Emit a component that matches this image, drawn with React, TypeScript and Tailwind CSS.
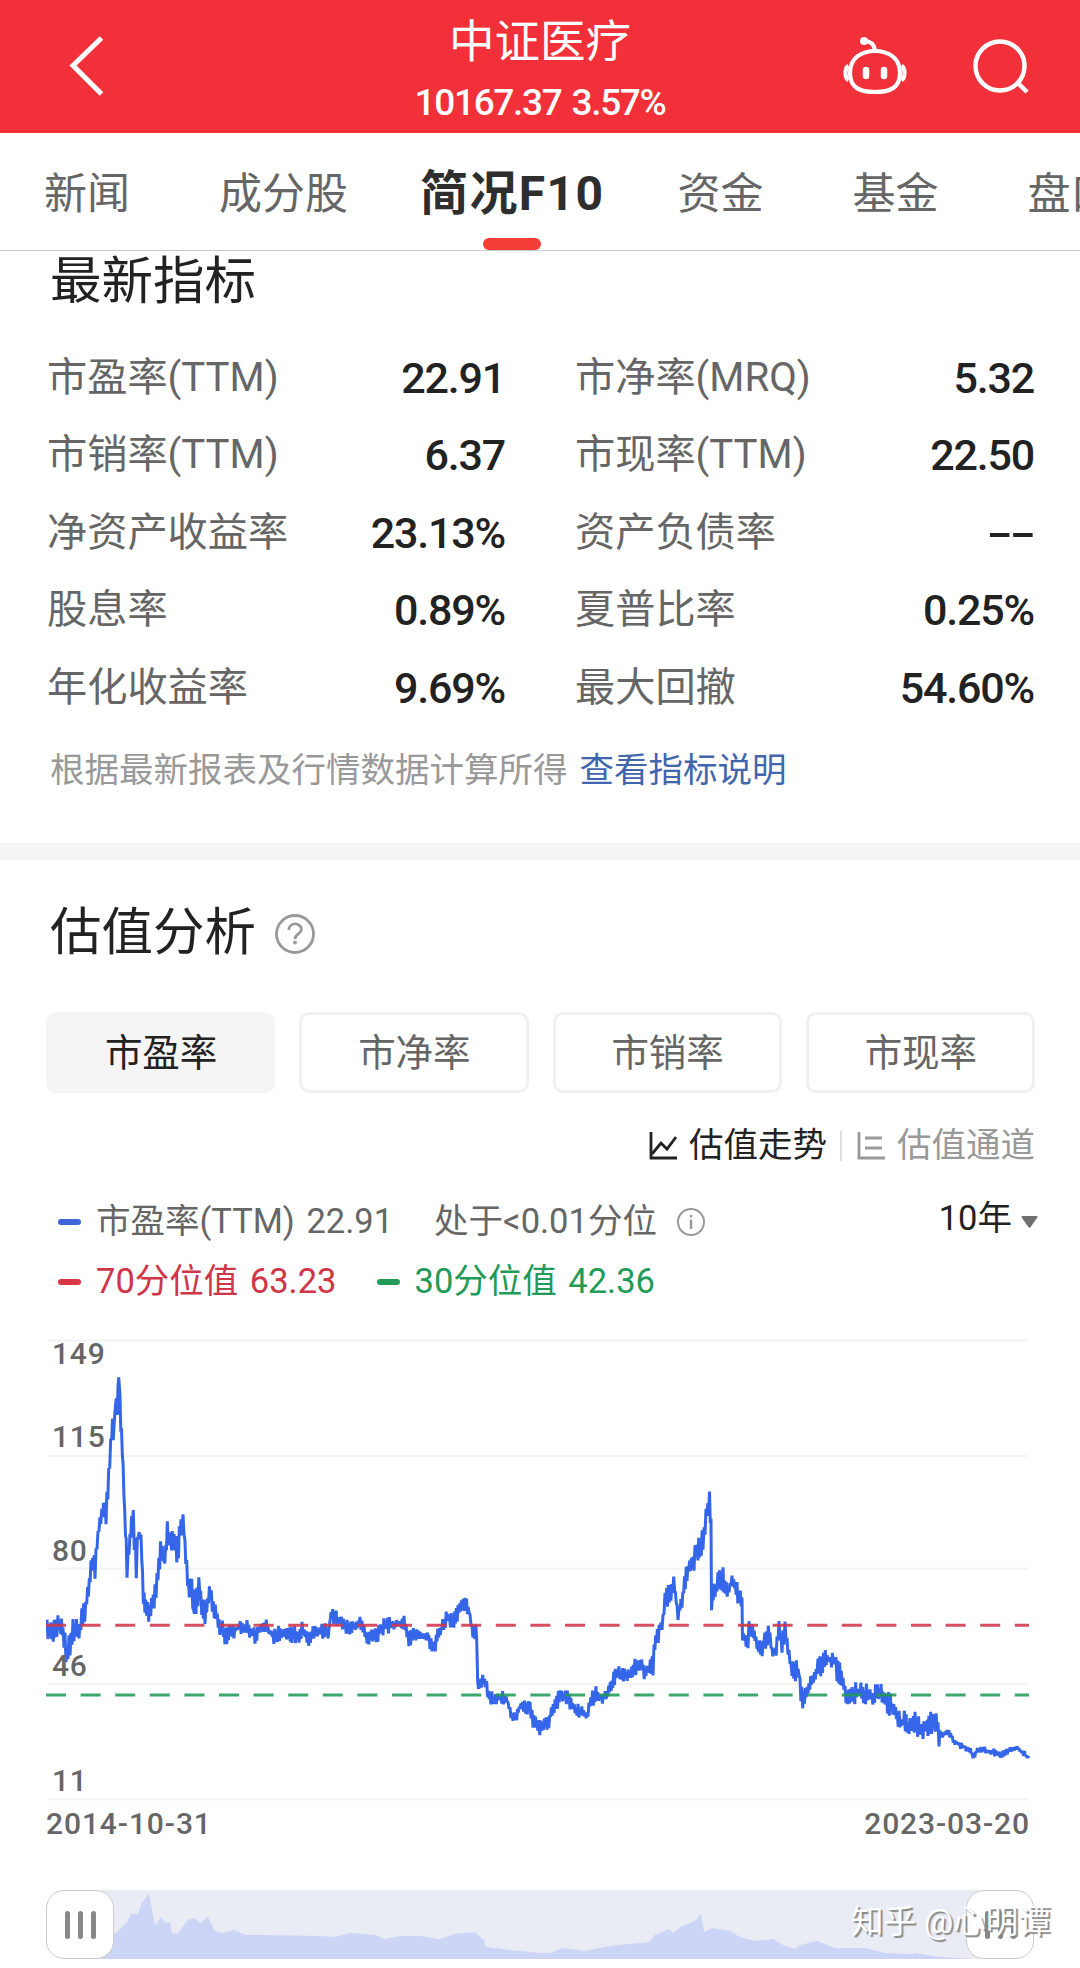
import clsx from 'clsx';

const tabs = ['新闻', '成分股', '简况F10', '资金', '基金', '盘口'];

const metrics = [
  ['市盈率(TTM)', '22.91'],
  ['市净率(MRQ)', '5.32'],
  ['市销率(TTM)', '6.37'],
  ['市现率(TTM)', '22.50'],
  ['净资产收益率', '23.13%'],
  ['资产负债率', '--'],
  ['股息率', '0.89%'],
  ['夏普比率', '0.25%'],
  ['年化收益率', '9.69%'],
  ['最大回撤', '54.60%'],
];

const kinds = ['市盈率', '市净率', '市销率', '市现率'];

const gridLines = [
  { y: 1340.5, label: '149', base: 1364 },
  { y: 1456, label: '115', base: 1447 },
  { y: 1568.5, label: '80', base: 1561 },
  { y: 1684, label: '46', base: 1676 },
  { y: 1799.5, label: '11', base: 1791 },
];

// x, y pairs of the valuation curve; daily jitter is added in buildTrend
const trend = [
  47, 1622, 50, 1633, 55, 1630, 60.7, 1624, 63, 1637, 67, 1655, 70, 1646, 74, 1628, 79, 1634, 82.7, 1618, 86.7, 1600,
  92.7, 1563, 95, 1565, 99, 1527, 102.7, 1509, 106, 1518, 108.7, 1477, 111.7, 1430, 114, 1437, 115.3, 1403, 117.3, 1410,
  118.7, 1372, 120, 1407, 122.3, 1443, 124.7, 1513, 127, 1574, 130, 1540, 132.3, 1509, 134.3, 1537, 136.3, 1565,
  138.3, 1533, 141, 1537, 143.3, 1600, 145.7, 1609, 148.7, 1618, 150.7, 1603, 155, 1593, 158, 1567, 161.3, 1543,
  164, 1564, 167.3, 1531, 170, 1543, 172.3, 1534, 174, 1547, 177.7, 1551, 181, 1523, 184, 1529, 186.7, 1573, 189.3, 1589,
  191.7, 1589, 193.7, 1614, 196, 1599, 199.7, 1588, 201.7, 1612, 206.7, 1609, 210.3, 1591, 213.3, 1612, 217.3, 1618,
  220.7, 1627, 226.7, 1636, 233, 1631, 242, 1625, 247, 1629, 255, 1635, 262, 1625, 268, 1630, 273, 1636, 283, 1633,
  300, 1635, 303, 1628, 307, 1641, 313, 1634, 329, 1630, 330.3, 1617, 332, 1614, 337, 1620, 348, 1629, 360, 1622,
  364, 1633, 367, 1640, 377, 1635, 383, 1627, 393, 1625, 404, 1622, 408, 1638, 415, 1634, 423, 1637, 428, 1634,
  432, 1650, 437, 1640, 442, 1627, 447, 1617, 453, 1622, 458, 1611, 465.7, 1604, 469, 1610, 472, 1630, 476.7, 1633,
  477.7, 1684, 480, 1685, 482.7, 1679, 486.7, 1687, 490, 1700, 500, 1698, 507, 1700, 511, 1715, 515, 1716, 520, 1707,
  530, 1707, 533, 1723, 538, 1728, 547, 1724, 555, 1705, 560, 1695, 570, 1701, 576, 1711, 580, 1710, 587, 1716,
  590, 1702, 595, 1695, 607, 1697, 612, 1682, 617, 1675, 630, 1676, 635, 1667, 640, 1662, 645, 1672, 653, 1669,
  654, 1647, 660, 1627, 663, 1620, 665, 1603, 670, 1593, 673.7, 1582, 678, 1614, 682, 1600, 687, 1570, 693, 1563,
  697, 1549, 703, 1541, 707, 1513, 709.5, 1501, 711, 1527, 711.5, 1603, 714, 1593, 717, 1585, 723, 1579, 728, 1590,
  732, 1580, 737, 1592, 742, 1600, 742.5, 1638, 747, 1639, 750, 1629, 755, 1637, 758, 1650, 763, 1643, 770, 1636,
  772, 1653, 777, 1649, 779, 1627, 782, 1641, 786, 1631, 788, 1650, 792, 1671, 799, 1671, 800, 1691, 802.7, 1698,
  808, 1687, 818, 1668, 828, 1659, 835, 1662, 838, 1672, 843, 1680, 846, 1697, 853, 1698, 860, 1690, 870, 1697,
  883, 1695, 892, 1707, 900, 1723, 907, 1722, 910, 1729, 915, 1724, 923, 1730, 928, 1724, 937, 1722, 939, 1738,
  947, 1731, 955, 1742, 967, 1748, 973, 1755, 980, 1749, 992, 1752, 1002, 1755, 1011, 1748, 1018, 1749, 1029, 1758,
];

const overview =
  '114,1934 120,1929 127,1922 131,1914 138,1914 142,1903 149,1893 155,1926 161,1917 165,1923 170,1922 172,1934 178,1933 188,1920 195,1918 200,1923 208,1917 215,1931 222,1933 234,1930 245,1935 262,1935 320,1936 335,1937 350,1933 375,1935 385,1939 400,1936 420,1936 440,1939 455,1934 475,1932 484,1940 486,1947 510,1950 540,1953 550,1953 562,1948 585,1951 610,1946 648,1942 655,1935 669,1929 673,1933 680,1927 695,1921 701,1914 704,1932 712,1928 730,1931 740,1937 755,1941 773,1939 785,1946 795,1949 800,1945 817,1941 835,1948 865,1948 885,1953 910,1954 915,1953 940,1957 975,1959 114,1959';

function buildTrend() {
  const out: string[] = [];
  let seed = 7;
  for (let i = 0; i < trend.length - 2; i += 2) {
    const [x0, y0, x1, y1] = trend.slice(i, i + 4);
    const steps = Math.max(1, Math.round((x1 - x0) / 0.9));
    for (let s = 0; s < steps; s++) {
      seed = (seed * 16807) % 2147483647;
      const noise = (seed / 2147483647) ** 1.5 * 0.85 + 0.15;
      const side = out.length % 2 ? 1 : -1;
      const x = x0 + ((x1 - x0) * s) / steps;
      const amp = x < 225 ? 15 : x > 940 ? 4 : x > 650 ? 13 : 9;
      const y = y0 + ((y1 - y0) * s) / steps + side * noise * amp;
      out.push(`${x.toFixed(1)},${y.toFixed(1)}`);
    }
  }
  out.push('1029,1758');
  return out.join(' ');
}

function Header() {
  return (
    <header className="grid h-[133px] shrink-0 grid-cols-3 bg-[#f23039] text-white">
      <div className="flex items-center pl-[66px] pb-1">
        <svg width="42" height="64" viewBox="0 0 42 64" fill="none" stroke="currentColor" strokeWidth="5">
          <path d="M35.5 5 7 32.5 35.5 61" />
        </svg>
      </div>
      <div className="flex flex-col items-center pt-[15px]">
        <h1 className="text-[45.5px] leading-[56px]">中证医疗</h1>
        <p className="mt-[12px] text-[37px] font-medium leading-[40px] tracking-[-1.3px] [word-spacing:2px] whitespace-nowrap">10167.37 3.57%</p>
      </div>
      <div className="flex items-start justify-end pr-[49px] pt-[35px]">
        {/* robot assistant */}
        <svg className="mr-[63px]" width="66" height="62" viewBox="0 0 66 62" fill="none" stroke="currentColor" strokeWidth="4.2">
          <path d="M33 16c13 0 25 6.500 25 22 0 15-10 19-25 19S8 53 8 38c0-15.500 12-22 25-22Z" />
          <path d="M22 6c7 0 10 3 11 9" />
          <circle cx="22" cy="6" r="4" fill="currentColor" stroke="none" />
          <path d="M6.500 31c-4 2-4 12 0 14M59.500 31c4 2 4 12 0 14" />
          <path d="M24 35v6M42 35v6" strokeWidth="6.500" strokeLinecap="round" />
        </svg>
        <svg width="60" height="62" viewBox="0 0 60 62" fill="none" stroke="currentColor" strokeWidth="4.5">
          <circle cx="29" cy="31" r="24.5" />
          <path d="m46 47 10 10" />
        </svg>
      </div>
    </header>
  );
}

function TabBar() {
  return (
    <nav className="flex h-[118px] shrink-0 gap-[89px] overflow-hidden border-b border-[#c9c9c9] pl-[44px] pt-[33px] whitespace-nowrap text-[#666]">
      {tabs.map((tab) =>
        tab === '简况F10' ? (
          <div key={tab} className="-ml-[17px] -mr-[16px] flex flex-col items-center">
            <span className="text-[48px] font-bold leading-[56px] tracking-[1.4px] text-[#2e2e2e]">{tab}</span>
            <i className="mt-[16px] h-[12px] w-[58px] rounded-full bg-[#f43d37]" />
          </div>
        ) : (
          <span key={tab} className="text-[43px] leading-[56px]">{tab}</span>
        ),
      )}
    </nav>
  );
}

function Indicators() {
  return (
    <section className="h-[592px] shrink-0 pl-[47px] pr-[46px] pt-[3px]">
      <h2 className="pl-[3px] text-[51.5px] leading-[56px] text-[#222]">最新指标</h2>
      <div className="mt-[29px] grid grid-cols-[458px_459px] gap-x-[70px]">
        {metrics.map(([label, value]) => (
          <div key={label} className="flex h-[77.5px] items-center justify-between">
            <span className="text-[40.2px] text-[#666]">{label}</span>
            <span
              className={clsx(
                'text-[43px] font-medium tracking-[-1.2px] text-[#222]',
                value === '--' && 'origin-right scale-x-[1.75]',
              )}
            >
              {value}
            </span>
          </div>
        ))}
      </div>
      <p className="mt-[20px] pl-[3px] text-[34.5px] leading-[46px] text-[#999]">
        根据最新报表及行情数据计算所得
        <a className="ml-[12px] text-[#4166ad]">查看指标说明</a>
      </p>
    </section>
  );
}

function Dash({ className }: { className: string }) {
  return <i className={clsx('h-[6px] w-[23px] rounded-full', className)} />;
}

function Legend() {
  return (
    <div className="mt-[22px] flex flex-col pl-[12px] text-[34.5px] text-[#666] [word-spacing:3px]">
      <div className="flex h-[60px] items-center">
        <Dash className="bg-[#4164d8]" />
        <span className="ml-[15px]">市盈率(TTM) 22.91</span>
        <span className="ml-[41px]">处于&lt;0.01分位</span>
        <svg className="ml-[19px]" width="30" height="30" viewBox="0 0 30 30" fill="none" stroke="#999" strokeWidth="2">
          <circle cx="15" cy="15" r="13" />
          <path d="M15 12.5v9.5M15 8v2.5" strokeWidth="2.4" />
        </svg>
        <button className="ml-auto -mr-px flex items-center gap-[9px] pb-[6px] text-[#222]">
          10年
          <svg className="mt-[6px]" width="17" height="12" viewBox="0 0 17 12" fill="#707070">
            <path d="M1.500 0h14q1.500 0 .8 1.500l-6.600 9.600q-1.200 1.200-2.400 0L.7 1.500Q0 0 1.500 0Z" />
          </svg>
        </button>
      </div>
      <div className="flex h-[60px] items-center">
        <Dash className="bg-[#dc3545]" />
        <span className="ml-[15px] text-[#cf3448]">70分位值 63.23</span>
        <Dash className="ml-[40px] bg-[#229a58]" />
        <span className="ml-[15px] text-[#229a58]">30分位值 42.36</span>
      </div>
    </div>
  );
}

function Chart() {
  return (
    <svg className="mt-[18px] shrink-0" width="990" height="520" viewBox="46 1330 990 520">
      {gridLines.map((line) => (
        <path key={line.label} d={`M48 ${line.y}H1028`} stroke="#f4f4f4" strokeWidth="2" />
      ))}
      <polyline points={buildTrend()} fill="none" stroke="#3566ea" strokeWidth="3" strokeLinejoin="bevel" />
      <path d="M46 1625.3H1029" stroke="#d0384c" strokeOpacity="0.88" strokeWidth="3" strokeDasharray="20 14.6" />
      <path d="M46 1695H1029" stroke="#229a5a" strokeOpacity="0.88" strokeWidth="3" strokeDasharray="20 14.6" />
      <g fill="#666" className="text-[30px] font-medium">
        {gridLines.map((line) => (
          <text key={line.label} x="52" y={line.base} letterSpacing="0.8">{line.label}</text>
        ))}
        <text x="46" y="1834" letterSpacing="0.9">2014-10-31</text>
        <text x="1030" y="1834" letterSpacing="0.9" textAnchor="end">2023-03-20</text>
      </g>
    </svg>
  );
}

function Handle() {
  return (
    <div className="flex h-[69px] w-[68px] shrink-0 items-center justify-center gap-[8px] rounded-[18px] border border-[#ccc] bg-white">
      <i className="h-[28px] w-[5px] rounded-full bg-[#888]" />
      <i className="h-[28px] w-[5px] rounded-full bg-[#888]" />
      <i className="h-[28px] w-[5px] rounded-full bg-[#888]" />
    </div>
  );
}

function RangeSlider() {
  return (
    <div className="relative mt-[40px] flex h-[69px] w-[988px] shrink-0 justify-between">
      <svg className="absolute left-[35px] top-0" width="919" height="69" viewBox="81 1890 919 69">
        <rect x="81" y="1890" width="919" height="69" fill="#e9ecf4" />
        <polygon points={`81,1959 81,1934 ${overview} 81,1959`} fill="#ccd5f6" />
      </svg>
      <div className="relative"><Handle /></div>
      <div className="relative"><Handle /></div>
      <span className="absolute left-[805px] top-[9px] whitespace-nowrap text-[32.5px] leading-[46px] text-white [text-shadow:2px_2px_1px_#888]">
        知乎 @心明谭
      </span>
    </div>
  );
}

function Valuation() {
  return (
    <section className="flex flex-col pl-[46px] pr-[43px]">
      <div className="mt-[45px] flex h-[56px] items-center pl-[4px]">
        <h2 className="text-[51.5px] leading-[56px] text-[#222]">估值分析</h2>
        <svg className="ml-[18px] mt-[2px]" width="42" height="42" viewBox="0 0 42 42" fill="none" stroke="#999" strokeWidth="2.8">
          <circle cx="21" cy="21" r="18.5" />
          <path d="M14.8 17c0-8 12.6-8 12.6-.5 0 4.500-6.400 4.500-6.400 9.500" />
          <circle cx="21" cy="29.500" r="1.900" fill="#999" stroke="none" />
        </svg>
      </div>
      <div className="mt-[51px] mr-[2px] grid h-[81px] grid-cols-4 gap-[24px]">
        {kinds.map((kind, i) => (
          <button
            key={kind}
            className={clsx(
              'rounded-[10px] border-[3px] pt-[2px] pl-px text-[37.5px]',
              i === 0 ? 'border-[#f5f5f5] bg-[#f5f5f5] text-[#222]' : 'border-[#f1f1f1] text-[#666]',
            )}
          >
            {kind}
          </button>
        ))}
      </div>
      <div className="mt-[29px] mr-[2px] flex h-[48px] items-center justify-end text-[34.5px] text-[#999]">
        <svg width="28" height="28" viewBox="0 0 28 28" fill="none" stroke="#222" strokeWidth="2.8">
          <path d="M2 0v26h26" />
          <path d="m3 22 9-11 6 6 9-12" />
        </svg>
        <span className="ml-[12px] text-[#222]">估值走势</span>
        <i className="ml-[13px] mr-[15px] h-[30px] w-[2px] bg-[#ddd]" />
        <svg width="28" height="28" viewBox="0 0 28 28" fill="none" stroke="#999" strokeWidth="2.8">
          <path d="M2 0v26h26M8 6h17M8 16h17" />
        </svg>
        <span className="ml-[12px]">估值通道</span>
      </div>
      <Legend />
      <Chart />
      <RangeSlider />
    </section>
  );
}

export default function App() {
  return (
    <div className="flex h-[1968px] w-[1080px] flex-col overflow-hidden bg-white font-['Roboto','Noto_Sans_CJK_SC',sans-serif]">
      <Header />
      <TabBar />
      <Indicators />
      <div className="h-[17px] shrink-0 bg-[#f5f5f5]" />
      <Valuation />
    </div>
  );
}
